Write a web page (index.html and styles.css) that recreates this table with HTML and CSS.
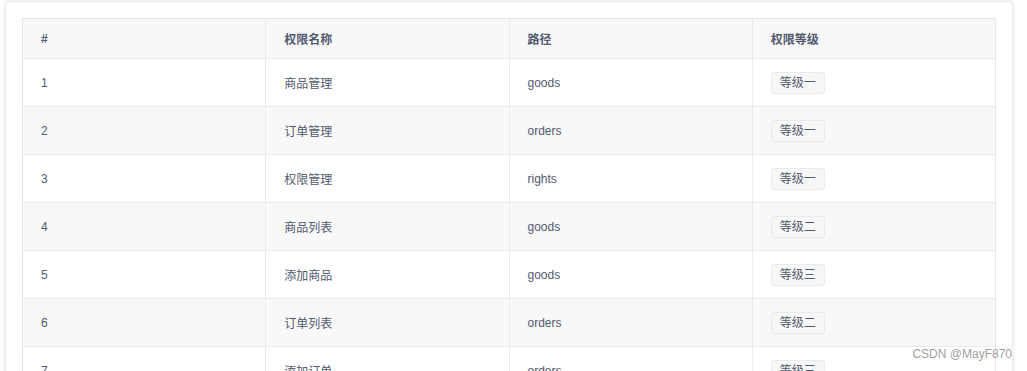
FILE: index.html
```html
<!DOCTYPE html>
<html lang="zh-CN">
<head>
<meta charset="utf-8">
<title>权限列表</title>
<link rel="stylesheet" href="styles.css">
</head>
<body>
<div class="page">
  <div class="card">
    <div class="table">
      <div class="row head">
        <div class="cell">#</div>
        <div class="cell">权限名称</div>
        <div class="cell">路径</div>
        <div class="cell">权限等级</div>
      </div>
      <div class="row">
        <div class="cell">1</div>
        <div class="cell">商品管理</div>
        <div class="cell">goods</div>
        <div class="cell"><span class="tag">等级一</span></div>
      </div>
      <div class="row stripe">
        <div class="cell">2</div>
        <div class="cell">订单管理</div>
        <div class="cell">orders</div>
        <div class="cell"><span class="tag">等级一</span></div>
      </div>
      <div class="row">
        <div class="cell">3</div>
        <div class="cell">权限管理</div>
        <div class="cell">rights</div>
        <div class="cell"><span class="tag">等级一</span></div>
      </div>
      <div class="row stripe">
        <div class="cell">4</div>
        <div class="cell">商品列表</div>
        <div class="cell">goods</div>
        <div class="cell"><span class="tag">等级二</span></div>
      </div>
      <div class="row">
        <div class="cell">5</div>
        <div class="cell">添加商品</div>
        <div class="cell">goods</div>
        <div class="cell"><span class="tag">等级三</span></div>
      </div>
      <div class="row stripe">
        <div class="cell">6</div>
        <div class="cell">订单列表</div>
        <div class="cell">orders</div>
        <div class="cell"><span class="tag">等级二</span></div>
      </div>
      <div class="row">
        <div class="cell">7</div>
        <div class="cell">添加订单</div>
        <div class="cell">orders</div>
        <div class="cell"><span class="tag">等级三</span></div>
      </div>
    </div>
  </div>
  <div class="watermark">CSDN @MayF870</div>
</div>
</body>
</html>
```

FILE: styles.css
```css
html, body {
  margin: 0;
  padding: 0;
  height: 100%;
  overflow: hidden;
  background: #ffffff;
}

body {
  font-family: "Liberation Sans", "Noto Sans CJK SC", sans-serif;
  font-size: 12px;
  color: #515a6e;
}

.page {
  padding: 1px 14px 0 5px;
  position: relative;
  height: 100%;
  box-sizing: border-box;
}

.card {
  background: #fff;
  border: 1px solid #ebebeb;
  border-radius: 4px;
  box-shadow: 0 0 4px rgba(0, 0, 0, 0.1);
  padding: 16px;
  min-height: 500px;
}

.table {
  border-top: 1px solid #e3e5e8;
  border-left: 1px solid #e3e5e8;
}

.row {
  display: grid;
  grid-template-columns: repeat(4, 1fr);
  background: #fff;
}

.row.head,
.row.stripe {
  background: #f8f8f9;
}

.cell {
  display: flex;
  align-items: center;
  box-sizing: border-box;
  height: 48px;
  padding: 0 18px;
  border-right: 1px solid #e8eaec;
  border-bottom: 1px solid #e8eaec;
  white-space: nowrap;
}

.row.head .cell {
  height: 40px;
  font-weight: bold;
}

.tag {
  display: inline-block;
  box-sizing: border-box;
  height: 22px;
  line-height: 20px;
  padding: 0 8px;
  border: 1px solid #e8eaec;
  border-radius: 3px;
  background: #f7f7f7;
  color: #515a6e;
  font-size: 12px;
}

.watermark {
  position: absolute;
  right: 15px;
  top: 347px;
  font-size: 12px;
  color: rgba(140, 140, 140, 0.85);
  font-family: "Liberation Sans", sans-serif;
  white-space: nowrap;
}
```
